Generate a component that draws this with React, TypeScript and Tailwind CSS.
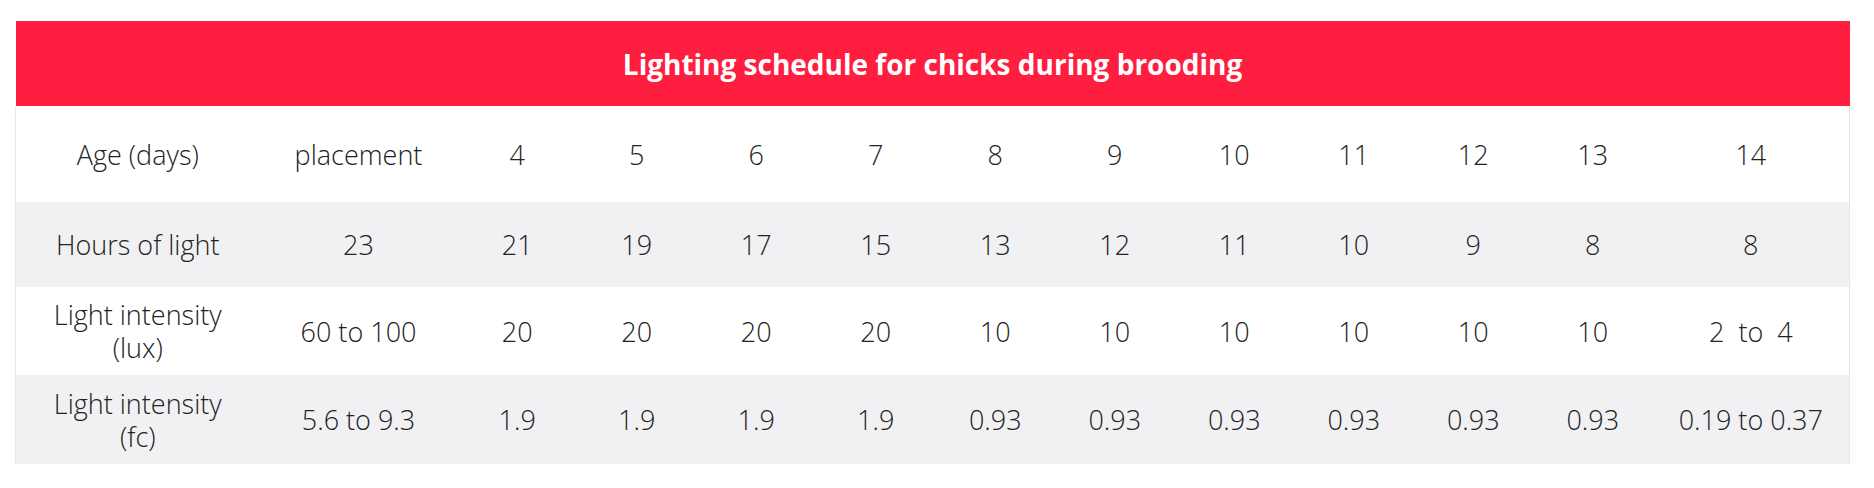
const rows: string[][] = [
  ["Age (days)", "placement", "4", "5", "6", "7", "8", "9", "10", "11", "12", "13", "14"],
  ["Hours of light", "23", "21", "19", "17", "15", "13", "12", "11", "10", "9", "8", "8"],
  ["Light intensity\n(lux)", "60 to 100", "20", "20", "20", "20", "10", "10", "10", "10", "10", "10", "2\u00a0 to\u00a0 4"],
  ["Light intensity\n(fc)", "5.6 to 9.3", "1.9", "1.9", "1.9", "1.9", "0.93", "0.93", "0.93", "0.93", "0.93", "0.93", "0.19 to 0.37"],
];

const rowHeights = ["h-[96px]", "h-[85px]", "h-[88px]", "h-[89px]"];

export default function App() {
  return (
    <div className="bg-white w-[1874px] h-[488px] pt-[21px] px-[15px] font-['Open_Sans',sans-serif]">
      <table className="w-[1834px] table-fixed border-collapse">
        <colgroup>
          <col className="w-[244px]" />
          <col className="w-[198px]" />
          {Array.from({ length: 10 }).map((_, i) => (
            <col key={i} className="w-[119.5px]" />
          ))}
          <col className="w-[197px]" />
        </colgroup>
        <thead>
          <tr className="h-[85px] bg-[#ff1e3f]">
            <th colSpan={13} className="text-white font-bold text-[28px] text-center align-middle">
              Lighting schedule for chicks during brooding
            </th>
          </tr>
        </thead>
        <tbody className="border-x border-[#e6e6e8]">
          {rows.map((row, r) => (
            <tr key={r} className={`${rowHeights[r]} ${r % 2 === 1 ? "bg-[#f1f1f3]" : "bg-white"}`}>
              {row.map((cell, c) => (
                <td
                  key={c}
                  className="text-center align-middle text-[27px] font-light leading-[33px] text-[#222222] whitespace-pre-line"
                >
                  {cell}
                </td>
              ))}
            </tr>
          ))}
        </tbody>
      </table>
    </div>
  );
}
